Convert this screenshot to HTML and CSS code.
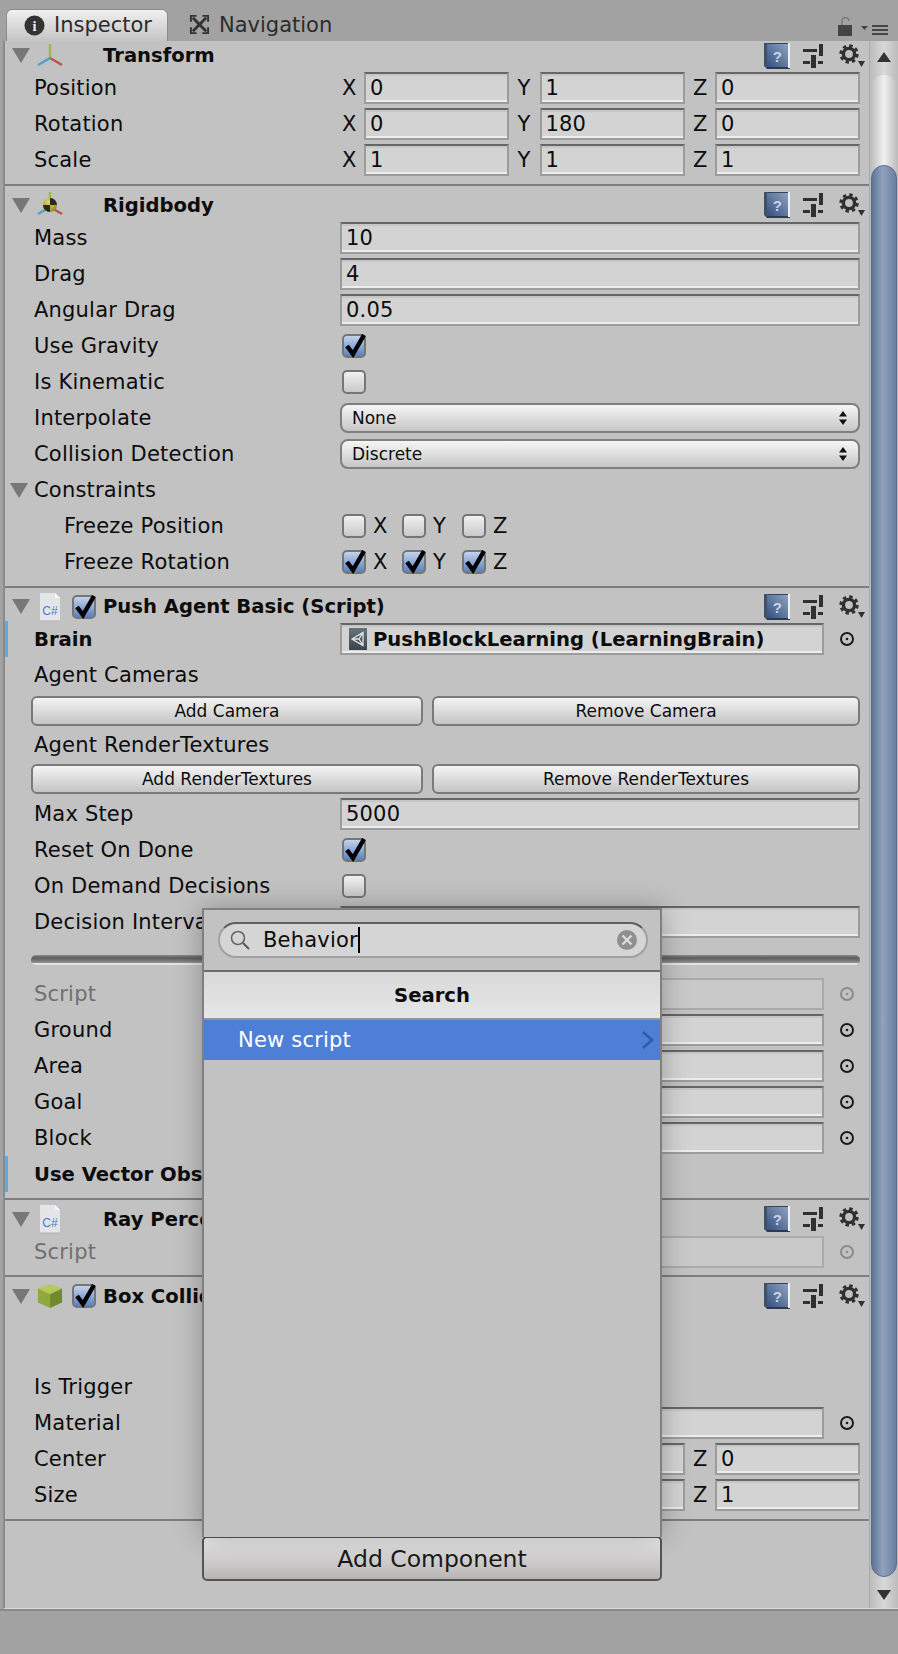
FILE: index.html
```html
<!DOCTYPE html>
<html lang="en">
<head>
<meta charset="utf-8">
<title>Inspector</title>
<link rel="stylesheet" href="styles.css">
</head>
<body>
<svg class="defs" width="0" height="0" aria-hidden="true">
  <defs>
    <linearGradient id="bookFill" x1="1" y1="0" x2="0" y2="1"><stop offset="0" stop-color="#8ea2c0"/><stop offset="1" stop-color="#34507e"/></linearGradient>
    <linearGradient id="logoFill" x1="0" y1="0" x2="0" y2="1"><stop offset="0" stop-color="#68747c"/><stop offset="1" stop-color="#39444c"/></linearGradient>
    <radialGradient id="ballFill" cx=".4" cy=".3" r=".8"><stop offset="0" stop-color="#e6d873"/><stop offset="1" stop-color="#8d7d1f"/></radialGradient>
    <symbol id="i-axes" viewBox="0 0 26 26"><path d="M13 15V1" stroke="#9dbb3e" stroke-width="2.4" fill="none"/><path d="M13 15 25 22" stroke="#c0524a" stroke-width="2.4" fill="none"/><path d="M13 15 1 22" stroke="#4f9fd0" stroke-width="2.4" fill="none"/></symbol>
    <symbol id="i-body" viewBox="0 0 26 26"><path d="M13 12V0" stroke="#9dbb3e" stroke-width="2.4" fill="none"/><path d="M13 15 25 22" stroke="#c0524a" stroke-width="2.4" fill="none"/><path d="M13 15 1 22" stroke="#4f9fd0" stroke-width="2.4" fill="none"/><circle cx="13" cy="13" r="7" fill="url(#ballFill)"/><path d="M13 13H6a7 7 0 0 0 7 7ZM13 13h7a7 7 0 0 0-7-7Z" fill="#2b2b1c"/></symbol>
    <symbol id="i-file" viewBox="0 0 22 30"><path d="M1 1H16L21 6V29H1Z" fill="#e4e5e8"/><path d="M16 1V6H21Z" fill="#f8f8f8"/><path d="M1 29H21" stroke="#b0b0b0"/><text x="11" y="23" text-anchor="middle" class="svg-cs">C#</text></symbol>
    <symbol id="i-cube" viewBox="0 0 28 28"><path d="M14 1 27 6 14 12 1 6Z" fill="#b7c85c"/><path d="M1 6 14 12V27L1 21Z" fill="#8fa93f"/><path d="M27 6 14 12V27L27 21Z" fill="#6f8b2c"/></symbol>
    <symbol id="i-book" viewBox="0 0 26 26"><path d="M0 0H4V26H3L0 23Z" fill="#3f5069"/><path d="M3 1H24V24H3Z" fill="url(#bookFill)"/><path d="M3 24H26V26H3Z" fill="#2f3a4e"/><path d="M24 0H26V25H24Z" fill="#eef0f3"/><path d="M4 0H24V1H4Z" fill="#34435c"/><text x="13.500" y="19" text-anchor="middle" class="svg-q">?</text></symbol>
    <symbol id="i-tune" viewBox="0 0 21 24"><path d="M0 5H14V8H0ZM16 0H20V12H16ZM0 17H7V20H0ZM8 11H13V24H8ZM15 17H20V20H15Z" fill="#303030"/></symbol>
    <symbol id="i-gear" viewBox="0 0 27 24"><circle cx="11" cy="10" r="5.6" fill="none" stroke="#303030" stroke-width="3.4"/><circle cx="11" cy="10" r="8.2" fill="none" stroke="#303030" stroke-width="3" stroke-dasharray="3.4 3.03"/><path d="M20 17H27L23.500 23Z" fill="#303030"/></symbol>
    <symbol id="i-target" viewBox="0 0 14 14"><circle cx="7" cy="7" r="6" fill="none" stroke="currentColor" stroke-width="2"/><circle cx="7" cy="7" r="1.300" fill="currentColor"/></symbol>
    <symbol id="i-check" viewBox="0 0 26 26"><path d="M5 13 11 21 22 2" fill="none" stroke="#000" stroke-width="4.400"/></symbol>
    <symbol id="i-arrows" viewBox="0 0 8 14"><path d="M4 0 8 5.500H0ZM4 14 0 8.500H8Z" fill="#111"/></symbol>
  </defs>
</svg>

<div class="window">
  <div class="tabs">
    <div class="tab tab-active">
      <svg class="tab-icon" viewBox="0 0 22 22"><circle cx="11" cy="11" r="10.500" fill="#333"/><text x="11" y="17" text-anchor="middle" class="svg-i">i</text></svg>
      <span>Inspector</span>
    </div>
    <div class="tab">
      <svg class="tab-icon" viewBox="0 0 22 22"><path d="M1 1H8V3H3V8H1ZM14 1H21V8H19V3H14ZM1 14H3V19H8V21H1ZM19 14H21V21H14V19H19Z" fill="#333"/><path d="M4 4 18 18M18 4 4 18" stroke="#333" stroke-width="3"/></svg>
      <span>Navigation</span>
    </div>
    <div class="tab-tools">
      <svg class="lock" viewBox="0 0 14 19"><path d="M4 8V4a3.500 3.500 0 0 1 7 0" fill="none" stroke="#777" stroke-width="1.500"/><rect x="0" y="8" width="14" height="11" fill="#444"/></svg>
      <svg class="menu" viewBox="0 0 27 10"><path d="M0 1H7L3.500 5Z" fill="#444"/><path d="M11 0H27V2H11ZM11 4H27V6H11ZM11 8H27V10H11Z" fill="#444"/></svg>
    </div>
  </div>

  <div class="main">
    <div class="content">
      <section class="comp">
        <div class="head head-first">
          <i class="tri"></i><svg class="ico"><use href="#i-axes"/></svg><span class="cb-gap"></span><b>Transform</b>
          <div class="tools"><svg class="t-book"><use href="#i-book"/></svg><svg class="t-tune"><use href="#i-tune"/></svg><svg class="t-gear"><use href="#i-gear"/></svg></div>
        </div>
        <div class="row"><span class="label">Position</span><div class="vec"><div class="axis"><span>X</span><div class="field">0</div></div><div class="axis"><span>Y</span><div class="field">1</div></div><div class="axis"><span>Z</span><div class="field">0</div></div></div></div>
        <div class="row"><span class="label">Rotation</span><div class="vec"><div class="axis"><span>X</span><div class="field">0</div></div><div class="axis"><span>Y</span><div class="field">180</div></div><div class="axis"><span>Z</span><div class="field">0</div></div></div></div>
        <div class="row"><span class="label">Scale</span><div class="vec"><div class="axis"><span>X</span><div class="field">1</div></div><div class="axis"><span>Y</span><div class="field">1</div></div><div class="axis"><span>Z</span><div class="field">1</div></div></div></div>
      </section>

      <section class="comp">
        <div class="head">
          <i class="tri"></i><svg class="ico"><use href="#i-body"/></svg><span class="cb-gap"></span><b>Rigidbody</b>
          <div class="tools"><svg class="t-book"><use href="#i-book"/></svg><svg class="t-tune"><use href="#i-tune"/></svg><svg class="t-gear"><use href="#i-gear"/></svg></div>
        </div>
        <div class="row"><span class="label">Mass</span><div class="field grow">10</div></div>
        <div class="row"><span class="label">Drag</span><div class="field grow">4</div></div>
        <div class="row"><span class="label">Angular Drag</span><div class="field grow">0.05</div></div>
        <div class="row"><span class="label">Use Gravity</span><span class="cb on"><svg><use href="#i-check"/></svg></span></div>
        <div class="row"><span class="label">Is Kinematic</span><span class="cb"></span></div>
        <div class="row"><span class="label">Interpolate</span><div class="drop">None<svg class="drop-arrows"><use href="#i-arrows"/></svg></div></div>
        <div class="row"><span class="label">Collision Detection</span><div class="drop">Discrete<svg class="drop-arrows"><use href="#i-arrows"/></svg></div></div>
        <div class="row foldout"><i class="tri"></i><span class="label">Constraints</span></div>
        <div class="row"><span class="label indent">Freeze Position</span><div class="checks"><span class="cb"></span><span class="ck">X</span><span class="cb"></span><span class="ck">Y</span><span class="cb"></span><span class="ck">Z</span></div></div>
        <div class="row"><span class="label indent">Freeze Rotation</span><div class="checks"><span class="cb on"><svg><use href="#i-check"/></svg></span><span class="ck">X</span><span class="cb on"><svg><use href="#i-check"/></svg></span><span class="ck">Y</span><span class="cb on"><svg><use href="#i-check"/></svg></span><span class="ck">Z</span></div></div>
      </section>

      <section class="comp">
        <div class="head head-tight">
          <i class="tri"></i><svg class="ico ico-file"><use href="#i-file"/></svg><span class="cb on head-cb"><svg><use href="#i-check"/></svg></span><b>Push Agent Basic (Script)</b>
          <div class="tools"><svg class="t-book"><use href="#i-book"/></svg><svg class="t-tune"><use href="#i-tune"/></svg><svg class="t-gear"><use href="#i-gear"/></svg></div>
        </div>
        <div class="row changed"><b class="label">Brain</b><div class="field grow field-asset"><svg class="logo" viewBox="0 0 18 22"><rect width="18" height="22" fill="url(#logoFill)"/><path d="M3 11 14 4.500V17.500ZM3 11H10M14 4.500 10 11 14 17.500" fill="none" stroke="#dfe3e6" stroke-width="1.300"/></svg><b>PushBlockLearning (LearningBrain)</b></div><svg class="target"><use href="#i-target"/></svg></div>
        <div class="row"><span class="label">Agent Cameras</span></div>
        <div class="row row-btn"><button class="btn btn-left">Add Camera</button><button class="btn btn-right">Remove Camera</button></div>
        <div class="row row-short"><span class="label">Agent RenderTextures</span></div>
        <div class="row row-btn"><button class="btn btn-left">Add RenderTextures</button><button class="btn btn-right">Remove RenderTextures</button></div>
        <div class="row"><span class="label">Max Step</span><div class="field grow">5000</div></div>
        <div class="row"><span class="label">Reset On Done</span><span class="cb on"><svg><use href="#i-check"/></svg></span></div>
        <div class="row"><span class="label">On Demand Decisions</span><span class="cb"></span></div>
        <div class="row"><span class="label">Decision Interval</span><div class="field grow"></div></div>
        <div class="row row-sep"><div class="sep"></div></div>
        <div class="row"><span class="label muted">Script</span><div class="field grow field-off"></div><svg class="target target-off"><use href="#i-target"/></svg></div>
        <div class="row"><span class="label">Ground</span><div class="field grow"></div><svg class="target"><use href="#i-target"/></svg></div>
        <div class="row"><span class="label">Area</span><div class="field grow"></div><svg class="target"><use href="#i-target"/></svg></div>
        <div class="row"><span class="label">Goal</span><div class="field grow"></div><svg class="target"><use href="#i-target"/></svg></div>
        <div class="row"><span class="label">Block</span><div class="field grow"></div><svg class="target"><use href="#i-target"/></svg></div>
        <div class="row changed"><b class="label">Use Vector Observations</b></div>
      </section>

      <section class="comp comp-script">
        <div class="head">
          <i class="tri"></i><svg class="ico ico-file"><use href="#i-file"/></svg><span class="cb-gap"></span><b>Ray Perception (Script)</b>
          <div class="tools"><svg class="t-book"><use href="#i-book"/></svg><svg class="t-tune"><use href="#i-tune"/></svg><svg class="t-gear"><use href="#i-gear"/></svg></div>
        </div>
        <div class="row"><span class="label muted">Script</span><div class="field grow field-off"></div><svg class="target target-off"><use href="#i-target"/></svg></div>
      </section>

      <section class="comp">
        <div class="head">
          <i class="tri"></i><svg class="ico"><use href="#i-cube"/></svg><span class="cb on head-cb"><svg><use href="#i-check"/></svg></span><b>Box Collider</b>
          <div class="tools"><svg class="t-book"><use href="#i-book"/></svg><svg class="t-tune"><use href="#i-tune"/></svg><svg class="t-gear"><use href="#i-gear"/></svg></div>
        </div>
        <div class="blank"></div>
        <div class="row"><span class="label">Is Trigger</span><span class="cb"></span></div>
        <div class="row"><span class="label">Material</span><div class="field grow"></div><svg class="target"><use href="#i-target"/></svg></div>
        <div class="row"><span class="label">Center</span><div class="vec"><div class="axis"><span>X</span><div class="field">0</div></div><div class="axis"><span>Y</span><div class="field">0</div></div><div class="axis"><span>Z</span><div class="field">0</div></div></div></div>
        <div class="row"><span class="label">Size</span><div class="vec"><div class="axis"><span>X</span><div class="field">1</div></div><div class="axis"><span>Y</span><div class="field">1</div></div><div class="axis"><span>Z</span><div class="field">1</div></div></div></div>
      </section>

      <div class="add-wrap"><button class="add-btn">Add Component</button></div>

      <div class="popup">
        <div class="search-area">
          <div class="search">
            <svg class="mag" viewBox="0 0 20 20"><circle cx="8" cy="8" r="6.500" fill="none" stroke="#666" stroke-width="1.600"/><path d="M13 13 19 19" stroke="#555" stroke-width="2"/></svg>
            <span class="search-text">Behavior</span>
            <svg class="clear" viewBox="0 0 20 20"><circle cx="10" cy="10" r="10" fill="#8f8f8f"/><path d="M5.500 5.500 14.500 14.500M14.500 5.500 5.500 14.500" stroke="#dcdcdc" stroke-width="2.400"/></svg>
          </div>
        </div>
        <div class="pop-title">Search</div>
        <div class="pop-item"><span>New script</span><svg class="chev" viewBox="0 0 12 18"><path d="M1 1 10 9 1 17" fill="none" stroke="#2f5aa5" stroke-width="2.400"/></svg></div>
      </div>
    </div>

    <div class="scroll">
      <div class="arrow-box"><i class="arr-up"></i></div>
      <div class="track">
        <div class="slot"></div>
        <div class="thumb"></div>
      </div>
      <div class="arrow-box arrow-box-down"><i class="arr-down"></i></div>
    </div>
  </div>
  <div class="footer"></div>
</div>
</body>
</html>
```

FILE: styles.css
```css
* { box-sizing: border-box; }
html, body { margin: 0; padding: 0; }
body {
  width: 898px;
  height: 1654px;
  overflow: hidden;
  background: #a2a2a2;
  font-family: "DejaVu Sans", sans-serif;
  font-size: 21px;
  letter-spacing: .2px;
  color: #0c0c0c;
}
b { font-size: 19.6px; letter-spacing: 0; }
.defs { position: absolute; }
.svg-cs { font: 12px "Liberation Sans", sans-serif; fill: #4a7bd0; }
.svg-q { font: bold 15px "Liberation Sans", sans-serif; fill: #c8d3e6; }
.svg-i { font: bold 15px "Liberation Serif", serif; fill: #eee; }

.window { width: 898px; height: 1654px; display: flex; flex-direction: column; }

/* tab strip */
.tabs { height: 41px; flex: none; display: flex; align-items: flex-end; padding-left: 6px; background: #a2a2a2; }
.tab { height: 32px; width: 162px; display: flex; align-items: center; gap: 9px; padding: 0 0 1px 17px; font-size: 21px; letter-spacing: 0; color: #2c2c2c; }
.tab + .tab { width: 200px; padding-left: 21px; }
.tab-active { background: linear-gradient(#f0f0f0, #c4c4c4); border: 1px solid #8c8c8c; border-bottom: 0; border-radius: 6px 6px 0 0; }
.tab-icon { width: 21px; height: 21px; flex: none; }
.tab-tools { margin-left: auto; display: flex; align-items: flex-end; gap: 9px; padding: 0 10px 5px 0; }
.lock { width: 14px; height: 19px; }
.menu { width: 27px; height: 10px; margin-bottom: 1px; }

/* main area */
.main { margin-left: 3px; height: 1568px; flex: none; display: flex; background: #c2c2c2; border-left: 2px solid #8a8a8a; border-bottom: 1px solid #d8d8d8; }
.content { position: relative; width: 864px; flex: none; overflow: hidden; }
.comp { border-bottom: 2px solid #7d7d7d; padding-bottom: 6px; }
.comp-script { padding-bottom: 5px; }

.head { height: 34px; padding-top: 4px; display: flex; align-items: center; white-space: nowrap; }
.head-first { height: 29px; padding-top: 0; }
.head-tight { height: 33px; }
.tri { flex: none; width: 0; height: 0; margin-left: 7px; border: solid transparent; border-width: 15px 9px 0; border-top-color: #777; }
.ico { width: 26px; height: 26px; margin-left: 7px; flex: none; }
.ico-file { height: 30px; }
.cb-gap { width: 40px; flex: none; }
.tools { margin-left: auto; display: flex; align-items: center; padding-right: 4px; }
.t-book { width: 26px; height: 26px; }
.t-tune { width: 21px; height: 24px; margin-left: 13px; }
.t-gear { width: 27px; height: 24px; margin-left: 14px; }

.row { height: 36px; padding: 0 9px 0 29px; display: flex; align-items: center; white-space: nowrap; }
.row-short { height: 33px; }
.row-btn { height: 35px; padding-left: 26px; gap: 9px; }
.row-sep { padding: 3px 9px 0 26px; }
.blank { height: 58px; }
.foldout { padding-left: 5px; }
.foldout .tri { margin: 0 6px 0 0; }
.label { width: 306px; flex: none; overflow: visible; }
.indent { padding-left: 30px; }
.muted { color: #707070; }
.changed { position: relative; }
.changed::before { content: ""; position: absolute; left: 0; top: 0; bottom: 0; width: 3px; background: #5aabe6; }

.field { height: 32px; padding: 0 4px; display: flex; align-items: center; background: #d3d3d3; border: 2px solid #9c9c9c; border-top-color: #666; box-shadow: inset 0 -2px 0 #ececec, inset 0 2px 0 #c6c6c6; overflow: hidden; }
.grow { flex: 1; }
.field-off { background: #c9c9c9; border-color: #aaa; box-shadow: none; color: #777; }
.field-asset { padding-left: 7px; gap: 6px; }
.logo { width: 18px; height: 22px; flex: none; }
.target { width: 14px; height: 14px; margin: 0 6px 0 16px; flex: none; color: #1c1c1c; }
.target-off { color: #8b8b8b; }

.vec { flex: 1; display: grid; grid-template-columns: repeat(3, 1fr); column-gap: 6.5px; }
.axis { display: flex; align-items: center; }
.axis > span { width: 24px; padding-left: 2px; flex: none; }
.axis .field { flex: 1; }

.cb { position: relative; width: 24px; height: 24px; margin-left: 2px; flex: none; border: 2px solid #767676; border-radius: 5px; background: linear-gradient(#f0f0f0, #c9c9c9); }
.cb.on { background: linear-gradient(#c4d3ec, #5a80bf); }
.cb svg { position: absolute; left: -2px; top: -3px; width: 26px; height: 26px; }
.head .head-cb { margin: 0 7px 0 9px; }
.checks { display: flex; align-items: center; }
.ck { width: 34px; padding-left: 7px; }

.drop { flex: 1; height: 30px; padding: 0 10px; display: flex; align-items: center; justify-content: space-between; font-size: 17px; letter-spacing: 0; background: linear-gradient(#f6f6f6, #c6c6c6); border: 2px solid #7f7f7f; border-radius: 8px; }
.drop-arrows { width: 8px; height: 14px; margin-right: 1px; }

.btn { flex: none; height: 30px; padding: 0; font: 17px "DejaVu Sans", sans-serif; color: #0c0c0c; background: linear-gradient(#f4f4f4, #c4c4c4); border: 2px solid #7a7a7a; border-radius: 6px; }
.btn-left { width: 392px; }
.btn-right { width: 428px; }
.sep { flex: 1; height: 10px; border-radius: 5px; background: linear-gradient(#8a8a8a, #5c5c5c 30%, #8e8e8e 75%, #e4e4e4 75%); }

.add-wrap { display: flex; justify-content: center; padding: 15px 10px 0 0; }
.add-btn { width: 460px; height: 45px; font: 23.5px "DejaVu Sans", sans-serif; color: #1a1a1a; background: linear-gradient(#ececec, #b8b4b4); border: 2px solid #555; border-radius: 5px; }

/* popup */
.popup { position: absolute; left: 197px; top: 867px; width: 460px; height: 629px; background: #c2c2c2; border: 2px solid #808080; border-bottom: 0; box-shadow: 0 0 26px rgba(0, 0, 0, .28); }
.search-area { height: 62px; padding: 12px 12px 0 14px; border-bottom: 2px solid #6d6d6d; }
.search { height: 36px; padding: 0 9px 0 10px; display: flex; align-items: center; background: #d5d5d5; border: 2px solid #a0a0a0; border-top-color: #5f5f5f; border-radius: 18px; }
.mag { width: 20px; height: 20px; flex: none; margin-right: 13px; }
.search-text { flex: 1; height: 26px; line-height: 26px; }
.search-text::after { content: ""; display: inline-block; width: 2px; height: 26px; background: #000; vertical-align: top; }
.clear { width: 20px; height: 20px; flex: none; }
.pop-title { height: 48px; display: flex; align-items: center; justify-content: center; font-size: 19.6px; font-weight: bold; letter-spacing: 0; background: linear-gradient(#d9d9d9, #e6e6e6); border-bottom: 2px solid #959595; }
.pop-item { height: 40px; padding: 0 6px 0 34px; display: flex; align-items: center; justify-content: space-between; background: #4d7fd7; color: #fff; }
.chev { width: 12px; height: 18px; }

/* scrollbar */
.scroll { flex: 1; display: flex; flex-direction: column; border-left: 1px solid #aaa; background: linear-gradient(90deg, #bcbcbc, #d8d8d8 50%, #bcbcbc); }
.arrow-box { height: 34px; flex: none; display: flex; justify-content: center; padding-top: 11px; }
.arrow-box-down { height: 31px; padding-top: 13px; }
.arr-up, .arr-down { width: 0; height: 0; border: solid transparent; border-width: 0 7px 10px; border-bottom-color: #333; }
.arr-down { border-width: 10px 7px 0; border-top-color: #333; }
.track { flex: 1; display: flex; flex-direction: column; padding: 0 1px; min-height: 0; }
.slot { height: 100px; margin-bottom: -10px; flex: none; border-radius: 13px 13px 0 0; background: linear-gradient(90deg, #bdbdbd, #f0f0f0 50%, #bdbdbd); }
.thumb { flex: 1; border-radius: 13px; background: linear-gradient(90deg, #5e7396, #90a2bf 45%, #6a7ea0); border: 1px solid #5a6c8c; }

.footer { flex: 1; background: #a2a2a2; border-top: 2px solid #8a8a8a; }
```
